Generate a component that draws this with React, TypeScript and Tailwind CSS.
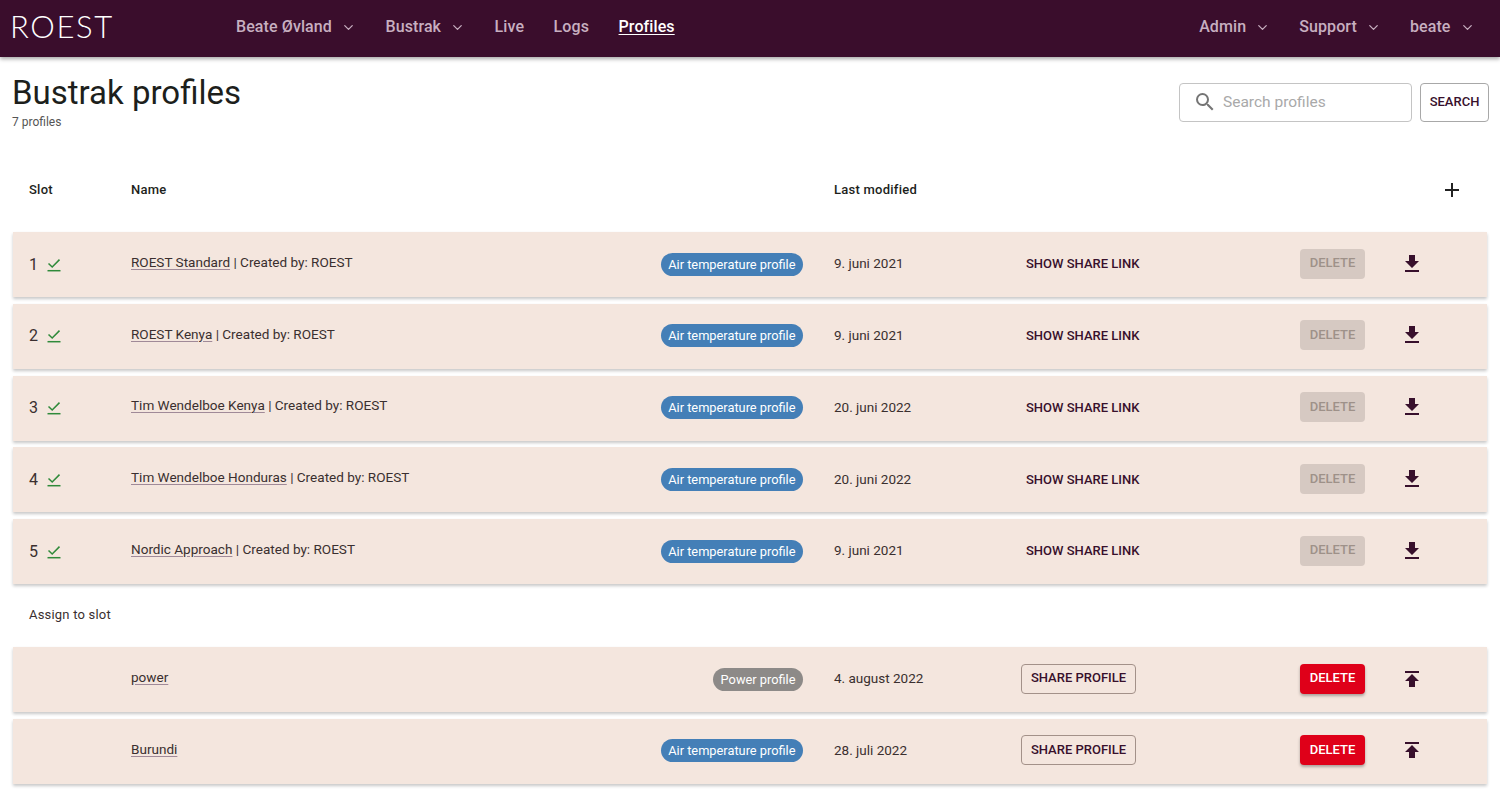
import { ChevronDown } from 'lucide-react';
import { MdAdd, MdFileDownload, MdPublish, MdSearch } from 'react-icons/md';

interface Profile {
  slot?: number;
  name: string;
  creator?: string;
  type: 'air' | 'power';
  modified: string;
}

const slotted: Profile[] = [
  { slot: 1, name: 'ROEST Standard', creator: 'ROEST', type: 'air', modified: '9. juni 2021' },
  { slot: 2, name: 'ROEST Kenya', creator: 'ROEST', type: 'air', modified: '9. juni 2021' },
  { slot: 3, name: 'Tim Wendelboe Kenya', creator: 'ROEST', type: 'air', modified: '20. juni 2022' },
  { slot: 4, name: 'Tim Wendelboe Honduras', creator: 'ROEST', type: 'air', modified: '20. juni 2022' },
  { slot: 5, name: 'Nordic Approach', creator: 'ROEST', type: 'air', modified: '9. juni 2021' },
];

const unassigned: Profile[] = [
  { name: 'power', type: 'power', modified: '4. august 2022' },
  { name: 'Burundi', type: 'air', modified: '28. juli 2022' },
];

const rowGrid = 'grid grid-cols-[118px_672px_31px_187px_279px_65px_1fr] items-center';

function NavItem({ label, menu, active }: { label: string; menu?: boolean; active?: boolean }) {
  return (
    <div className={`flex items-center gap-[9px] text-base font-medium tracking-[0.1px] ${active ? 'text-white underline underline-offset-2' : 'text-[#c7afc0]'}`}>
      <span>{label}</span>
      {menu && <ChevronDown className="w-[15px] h-[15px] mt-[2px] text-[#c7afc0]" strokeWidth={2} />}
    </div>
  );
}

function SlotCheck() {
  return (
    <svg className="w-[14px] h-[14px] ml-[9px]" viewBox="0 0 14 14" fill="none" stroke="#2f8a3a" strokeWidth="1.5">
      <path d="M1.5 5.5 L5.2 9 L12.5 1.6" />
      <path d="M0.5 12.7 H13.5" />
    </svg>
  );
}

function ProfileRow({ profile }: { profile: Profile }) {
  const assigned = profile.slot !== undefined;

  return (
    <div className={`${rowGrid} h-[65px] pb-[2px] bg-[#f4e6de] shadow-[0_2px_3px_rgba(0,0,0,0.22)] text-[#3a2f2f]`}>
      <div className="flex items-center pl-4 pt-[2px] text-base">
        {assigned && (
          <>
            <span>{profile.slot}</span>
            <SlotCheck />
          </>
        )}
      </div>
      <div className="flex items-center justify-between">
        <div className="text-[13.55px] mb-[3px]">
          <span className="underline decoration-[#a08a98] underline-offset-2">{profile.name}</span>
          {profile.creator && <span> | Created by: {profile.creator}</span>}
        </div>
        <span
          className={`h-[23px] mt-[1px] px-[7.5px] rounded-full text-[12.8px] leading-[23px] text-white ${
            profile.type === 'air' ? 'bg-[#447fb7]' : 'bg-[#8d8a88]'
          }`}
        >
          {profile.type === 'air' ? 'Air temperature profile' : 'Power profile'}
        </span>
      </div>
      <div />
      <div className="text-[13.5px]">{profile.modified}</div>
      <div>
        {assigned ? (
          <button className="ml-[5px] mb-[2px] text-[13px] font-medium text-[#38102c]">SHOW SHARE LINK</button>
        ) : (
          <button className="w-[115px] h-[30px] pb-[1px] border border-[#a39189] rounded text-[13px] font-medium text-[#38102c]">
            SHARE PROFILE
          </button>
        )}
      </div>
      {assigned ? (
        <button className="h-[30px] pb-[1px] bg-[#d6c9c2] rounded text-[13px] font-medium text-[#9e9189]">DELETE</button>
      ) : (
        <button className="h-[30px] pb-[1px] bg-[#df0019] rounded text-[13px] font-medium text-white shadow-[0_2px_3px_rgba(0,0,0,0.3)]">
          DELETE
        </button>
      )}
      <div className="pl-[35px] text-[#38102c]">
        {assigned ? <MdFileDownload className="w-6 h-6" /> : <MdPublish className="w-6 h-6" />}
      </div>
    </div>
  );
}

export default function App() {
  return (
    <div className="min-h-[807px] bg-white font-['Roboto',sans-serif] overflow-hidden">
      <header className="flex items-center h-[57px] pb-[4px] bg-[#3a0d2c] shadow-[0_2px_4px_rgba(0,0,0,0.35)] pl-3 pr-[25.5px]">
        <div className="w-[224px] -ml-[2px] mr-[2px] font-['Lato',sans-serif] font-light text-[31px] leading-none tracking-[1.6px] text-white">ROEST</div>
        <nav className="flex items-center gap-[29.5px]">
          <NavItem label="Beate Øvland" menu />
          <NavItem label="Bustrak" menu />
          <NavItem label="Live" />
          <NavItem label="Logs" />
          <NavItem label="Profiles" active />
        </nav>
        <nav className="flex items-center gap-[29px] ml-auto">
          <NavItem label="Admin" menu />
          <NavItem label="Support" menu />
          <NavItem label="beate" menu />
        </nav>
      </header>

      <div className="flex justify-between pt-[14px] pl-3 pr-[11px]">
        <div>
          <h1 className="mt-[1px] text-[33px] leading-[42px] text-[#1d1f1c]">Bustrak profiles</h1>
          <p className="text-xs text-[#555]">7 profiles</p>
        </div>
        <div className="flex items-start gap-2 pt-3">
          <div className="flex items-center w-[233px] h-[38.5px] border border-[#c4c4c4] rounded pl-[13px]">
            <MdSearch className="w-6 h-6 text-[#757575]" />
            <span className="ml-[6px] text-[15.5px] text-[#a9a9a9]">Search profiles</span>
          </div>
          <button className="w-[69px] h-[38.5px] pb-[2px] border border-[#a8a8a8] rounded text-[13px] font-medium text-[#38102c]">
            SEARCH
          </button>
        </div>
      </div>

      <div className="px-[13px]">
        <div className={`${rowGrid} h-[74px] mt-[23px] mb-[5px] text-[13px] font-medium tracking-[0.25px] text-[#1d1f1c]`}>
          <div className="pl-4">Slot</div>
          <div>Name</div>
          <div />
          <div>Last modified</div>
          <div />
          <div />
          <div className="flex justify-end pr-[23px]">
            <MdAdd className="w-6 h-6 text-[#222]" />
          </div>
        </div>

        <div className="flex flex-col gap-[6.75px]">
          {slotted.map((profile) => (
            <ProfileRow key={profile.name} profile={profile} />
          ))}
        </div>

        <div className="h-[63px] pl-4 pb-[2px] flex items-center text-[13px] tracking-[0.2px] text-[#3a2f2f]">Assign to slot</div>

        <div className="flex flex-col gap-[6.75px]">
          {unassigned.map((profile) => (
            <ProfileRow key={profile.name} profile={profile} />
          ))}
        </div>
      </div>
    </div>
  );
}
